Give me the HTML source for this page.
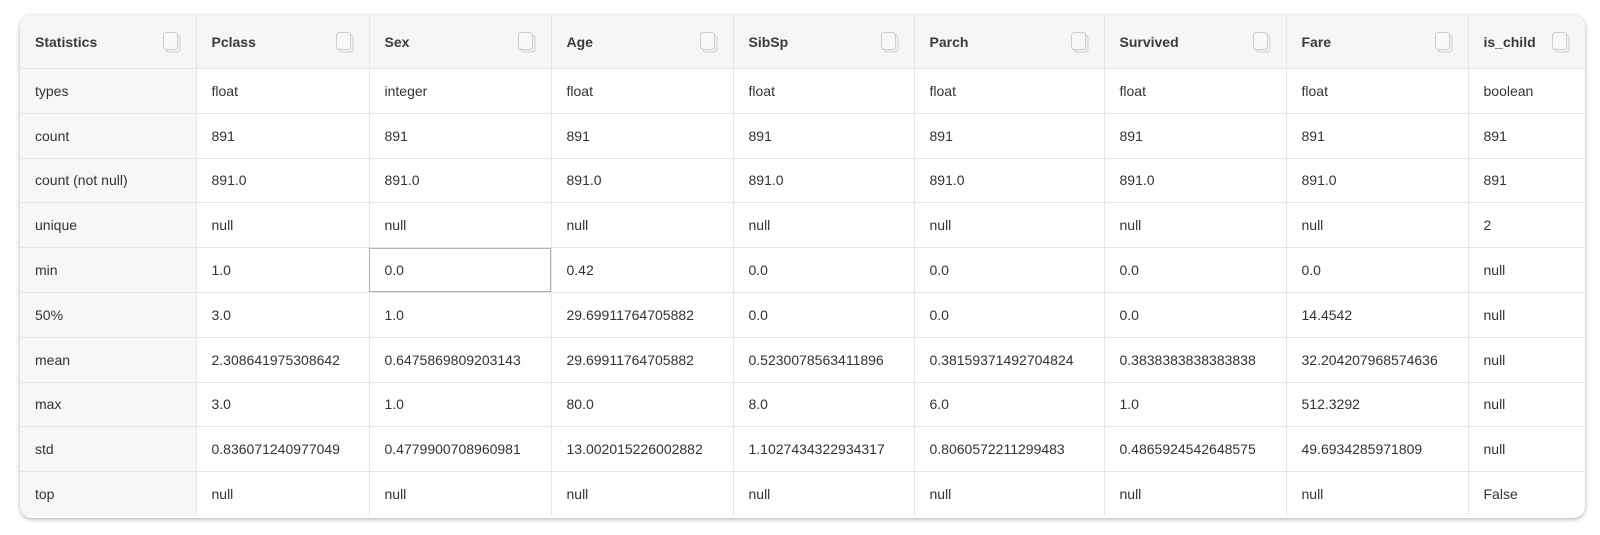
<!DOCTYPE html>
<html><head><meta charset="utf-8"><style>
html,body{margin:0;padding:0;background:#fff;width:1600px;height:535px;overflow:hidden}
.card{position:absolute;left:20px;top:15px;width:1565px;height:503px;border-radius:12px;box-shadow:0 1px 4px rgba(0,0,0,.25),0 2px 6px rgba(0,0,0,.08);overflow:hidden;background:#fff}
table{border-collapse:collapse;table-layout:fixed;font-family:"Liberation Sans",sans-serif;font-size:14px;color:#333;width:1565px}
td,th{border-right:1px solid #e6e6e6;border-bottom:1px solid #e6e6e6;padding:0 0 0 15px;text-align:left;white-space:nowrap;overflow:hidden}
th{height:53px;background:#f6f6f6;font-weight:bold;font-size:14px;color:#3a3a3a}
td{height:43.8px}
td:first-child{background:#f7f7f7}
tr:last-child td{border-bottom:none}
td:last-child,th:last-child{border-right:none}
.h{display:flex;align-items:center;justify-content:space-between;padding-right:14px}
svg{display:block}
.sel{outline:1px solid #b0b0b0;outline-offset:-1px}
</style></head><body>
<div class="card"><table>
<colgroup><col style="width:176px"><col style="width:173px"><col style="width:182px"><col style="width:182px"><col style="width:181px"><col style="width:190px"><col style="width:182px"><col style="width:182px"><col style="width:117px"></colgroup>
<tr>
<th><div class="h">Statistics<svg width="20" height="22" viewBox="0 0 20 22"><rect x="4" y="4" width="14" height="17" rx="3" fill="#f2f2f2" stroke="#d0d0d0"/><rect x="1.5" y="1.5" width="14" height="17" rx="3" fill="#f8f8f8" stroke="#cccccc"/></svg></div></th>
<th><div class="h">Pclass<svg width="20" height="22" viewBox="0 0 20 22"><rect x="4" y="4" width="14" height="17" rx="3" fill="#f2f2f2" stroke="#d0d0d0"/><rect x="1.5" y="1.5" width="14" height="17" rx="3" fill="#f8f8f8" stroke="#cccccc"/></svg></div></th>
<th><div class="h">Sex<svg width="20" height="22" viewBox="0 0 20 22"><rect x="4" y="4" width="14" height="17" rx="3" fill="#f2f2f2" stroke="#d0d0d0"/><rect x="1.5" y="1.5" width="14" height="17" rx="3" fill="#f8f8f8" stroke="#cccccc"/></svg></div></th>
<th><div class="h">Age<svg width="20" height="22" viewBox="0 0 20 22"><rect x="4" y="4" width="14" height="17" rx="3" fill="#f2f2f2" stroke="#d0d0d0"/><rect x="1.5" y="1.5" width="14" height="17" rx="3" fill="#f8f8f8" stroke="#cccccc"/></svg></div></th>
<th><div class="h">SibSp<svg width="20" height="22" viewBox="0 0 20 22"><rect x="4" y="4" width="14" height="17" rx="3" fill="#f2f2f2" stroke="#d0d0d0"/><rect x="1.5" y="1.5" width="14" height="17" rx="3" fill="#f8f8f8" stroke="#cccccc"/></svg></div></th>
<th><div class="h">Parch<svg width="20" height="22" viewBox="0 0 20 22"><rect x="4" y="4" width="14" height="17" rx="3" fill="#f2f2f2" stroke="#d0d0d0"/><rect x="1.5" y="1.5" width="14" height="17" rx="3" fill="#f8f8f8" stroke="#cccccc"/></svg></div></th>
<th><div class="h">Survived<svg width="20" height="22" viewBox="0 0 20 22"><rect x="4" y="4" width="14" height="17" rx="3" fill="#f2f2f2" stroke="#d0d0d0"/><rect x="1.5" y="1.5" width="14" height="17" rx="3" fill="#f8f8f8" stroke="#cccccc"/></svg></div></th>
<th><div class="h">Fare<svg width="20" height="22" viewBox="0 0 20 22"><rect x="4" y="4" width="14" height="17" rx="3" fill="#f2f2f2" stroke="#d0d0d0"/><rect x="1.5" y="1.5" width="14" height="17" rx="3" fill="#f8f8f8" stroke="#cccccc"/></svg></div></th>
<th><div class="h">is_child<svg width="20" height="22" viewBox="0 0 20 22"><rect x="4" y="4" width="14" height="17" rx="3" fill="#f2f2f2" stroke="#d0d0d0"/><rect x="1.5" y="1.5" width="14" height="17" rx="3" fill="#f8f8f8" stroke="#cccccc"/></svg></div></th>
</tr>
<tr><td>types</td><td>float</td><td>integer</td><td>float</td><td>float</td><td>float</td><td>float</td><td>float</td><td>boolean</td></tr>
<tr><td>count</td><td>891</td><td>891</td><td>891</td><td>891</td><td>891</td><td>891</td><td>891</td><td>891</td></tr>
<tr><td>count (not null)</td><td>891.0</td><td>891.0</td><td>891.0</td><td>891.0</td><td>891.0</td><td>891.0</td><td>891.0</td><td>891</td></tr>
<tr><td>unique</td><td>null</td><td>null</td><td>null</td><td>null</td><td>null</td><td>null</td><td>null</td><td>2</td></tr>
<tr><td>min</td><td>1.0</td><td class="sel">0.0</td><td>0.42</td><td>0.0</td><td>0.0</td><td>0.0</td><td>0.0</td><td>null</td></tr>
<tr><td>50%</td><td>3.0</td><td>1.0</td><td>29.69911764705882</td><td>0.0</td><td>0.0</td><td>0.0</td><td>14.4542</td><td>null</td></tr>
<tr><td>mean</td><td>2.308641975308642</td><td>0.6475869809203143</td><td>29.69911764705882</td><td>0.5230078563411896</td><td>0.38159371492704824</td><td>0.3838383838383838</td><td>32.204207968574636</td><td>null</td></tr>
<tr><td>max</td><td>3.0</td><td>1.0</td><td>80.0</td><td>8.0</td><td>6.0</td><td>1.0</td><td>512.3292</td><td>null</td></tr>
<tr><td>std</td><td>0.836071240977049</td><td>0.4779900708960981</td><td>13.002015226002882</td><td>1.1027434322934317</td><td>0.8060572211299483</td><td>0.4865924542648575</td><td>49.6934285971809</td><td>null</td></tr>
<tr><td>top</td><td>null</td><td>null</td><td>null</td><td>null</td><td>null</td><td>null</td><td>null</td><td>False</td></tr>
</table></div>
</body></html>
